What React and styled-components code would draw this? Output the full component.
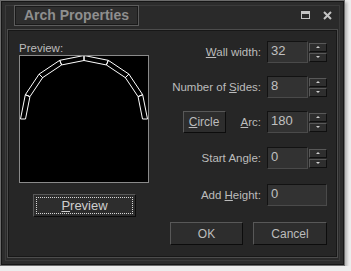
import React from 'react'
import styled, { createGlobalStyle } from 'styled-components'

const Global = createGlobalStyle`
  body {
    margin: 0;
    background: #ededed;
    font-family: "Liberation Sans", Arial, sans-serif;
  }
`

const Window = styled.div`
  width: 345px;
  height: 266px;
  box-sizing: border-box;
  background: #2a2a2a;
  border: 1px solid #6b6b6b;
  box-shadow: inset 0 0 0 1px #161616, inset 0 0 0 4px #2c2c2c, inset 0 0 0 5px #3a3a3a,
    2px 2px 3px rgba(0, 0, 0, 0.25);
  display: flex;
  flex-direction: column;
  padding: 0 6px 7px 6px;
`

const TitleBar = styled.div`
  height: 28px;
  display: flex;
  align-items: flex-start;
  padding: 4px 0 0 7px;
  box-sizing: border-box;
`

const TitleTab = styled.div`
  height: 21px;
  box-sizing: border-box;
  padding: 0 9px;
  border: 1px solid #5c5c5c;
  box-shadow: inset 0 0 0 1px #1a1a1a;
  background: #2e2e2e;
  color: #8f8f8f;
  font-weight: bold;
  font-size: 14px;
  line-height: 19px;
`

const TitleIcons = styled.div`
  margin-left: auto;
  display: flex;
  gap: 13px;
  padding: 6px 6px 0 0;
`

const Panel = styled.div`
  flex: 1;
  display: flex;
  border: 1px solid #4c4c4c;
  box-shadow: inset 0 0 0 1px #171717;
  background: #262626;
  padding: 11px 10px 0 11px;
`

const LeftCol = styled.div`
  width: 130px;
  display: flex;
  flex-direction: column;
`

const RightCol = styled.div`
  flex: 1;
  display: flex;
  flex-direction: column;
  gap: 13px;
`

const Label = styled.span`
  color: #bcbcbc;
  font-size: 11.5px;
  line-height: 14px;
  white-space: nowrap;
`

const PreviewBox = styled.div`
  width: 130px;
  height: 128px;
  box-sizing: border-box;
  border: 1px solid #8a8a8a;
  background: #000;
  svg {
    display: block;
  }
`

const Row = styled.div`
  height: 22px;
  display: flex;
  align-items: center;
  justify-content: flex-end;
  gap: 6px;
  margin-top: ${(p) => p.$shift || 0}px;
`

const Field = styled.div`
  width: 60px;
  height: 22px;
  display: flex;
  align-items: center;
  gap: 1px;
`

const TextBox = styled.div`
  flex: 1;
  height: 22px;
  box-sizing: border-box;
  background: #323232;
  border: 1px solid;
  border-color: #121212 #4a4a4a #4a4a4a #121212;
  color: #c0c0c0;
  font-size: 13px;
  line-height: 13px;
  padding: 2px 0 0 3px;
`

const Spin = styled.div`
  width: 18px;
  display: flex;
  flex-direction: column;
  gap: 1px;
`

const SpinBtn = styled.div`
  height: 9px;
  box-sizing: border-box;
  background: #2e2e2e;
  border: 1px solid;
  border-color: #585858 #0f0f0f #0f0f0f #585858;
  display: flex;
  align-items: center;
  justify-content: center;
  &::after {
    content: '';
    border-left: 2px solid transparent;
    border-right: 2px solid transparent;
    ${(p) =>
      p.$down ? 'border-top: 2px solid #cfcfcf;' : 'border-bottom: 2px solid #cfcfcf;'}
  }
`

const Button = styled.div`
  width: ${(p) => p.$w}px;
  height: ${(p) => p.$h || 22}px;
  box-sizing: border-box;
  background: #2d2d2d;
  border: 1px solid;
  border-color: #585858 #0c0c0c #0c0c0c #585858;
  color: #bcbcbc;
  font-size: 12px;
  display: flex;
  align-items: center;
  justify-content: center;
  position: relative;
`

const Focus = styled.div`
  position: absolute;
  inset: 2px;
  border: 1px dotted #d8d8d8;
`

const PreviewButton = styled(Button)`
  align-self: center;
  margin-top: 11px;
  margin-left: 1px;
  color: #cfcfcf;
  font-size: 13px;
`

const CircleButton = styled(Button)`
  margin-right: 9px;
`

const Footer = styled.div`
  display: flex;
  justify-content: flex-end;
  gap: 10px;
  margin-top: 3px;
`

function Arch() {
  const cx = 64
  const cy = 63
  const ro = 63.5
  const ri = 58.5
  const n = 8
  const pt = (r, i) => {
    const a = (Math.PI * i) / n
    return [cx - r * Math.cos(a), cy - r * Math.sin(a)]
  }
  const quads = []
  for (let i = 0; i < n; i++) {
    const p = [pt(ro, i), pt(ro, i + 1), pt(ri, i + 1), pt(ri, i)]
    quads.push(p.map((q) => q.join(',')).join(' '))
  }
  return (
    <svg width="128" height="126" viewBox="0 0 128 126">
      {quads.map((q, i) => (
        <polygon key={i} points={q} fill="none" stroke="#fff" strokeWidth="1" />
      ))}
    </svg>
  )
}

function SpinField({ value }) {
  return (
    <Field>
      <TextBox>{value}</TextBox>
      <Spin>
        <SpinBtn />
        <SpinBtn $down />
      </Spin>
    </Field>
  )
}

export default function App() {
  return (
    <>
      <Global />
      <Window>
        <TitleBar>
          <TitleTab>Arch Properties</TitleTab>
          <TitleIcons>
            <svg width="9" height="9" viewBox="0 0 9 9">
              <rect x="0.5" y="0.5" width="8" height="7" fill="none" stroke="#c4c4c4" />
              <rect x="0" y="0" width="9" height="3" fill="#c4c4c4" />
            </svg>
            <svg width="9" height="9" viewBox="0 0 9 9">
              <path d="M1 1 L8 8 M8 1 L1 8" stroke="#c4c4c4" strokeWidth="2" />
            </svg>
          </TitleIcons>
        </TitleBar>
        <Panel>
          <LeftCol>
            <Label>Preview:</Label>
            <PreviewBox>
              <Arch />
            </PreviewBox>
            <PreviewButton $w={103} $h={23}>
              <Focus />
              <span>
                <u>P</u>review
              </span>
            </PreviewButton>
          </LeftCol>
          <RightCol>
            <Row>
              <Label>
                <u>W</u>all width:
              </Label>
              <SpinField value="32" />
            </Row>
            <Row>
              <Label>
                Number of <u>S</u>ides:
              </Label>
              <SpinField value="8" />
            </Row>
            <Row>
              <CircleButton $w={43}>
                <span>
                  <u>C</u>ircle
                </span>
              </CircleButton>
              <Label>
                <u>A</u>rc:
              </Label>
              <SpinField value="180" />
            </Row>
            <Row $shift={1}>
              <Label>Start Angle:</Label>
              <SpinField value="0" />
            </Row>
            <Row $shift={2}>
              <Label>
                Add <u>H</u>eight:
              </Label>
              <Field>
                <TextBox>0</TextBox>
              </Field>
            </Row>
            <Footer>
              <Button $w={73} $h={23}>OK</Button>
              <Button $w={74} $h={23}>Cancel</Button>
            </Footer>
          </RightCol>
        </Panel>
      </Window>
    </>
  )
}
